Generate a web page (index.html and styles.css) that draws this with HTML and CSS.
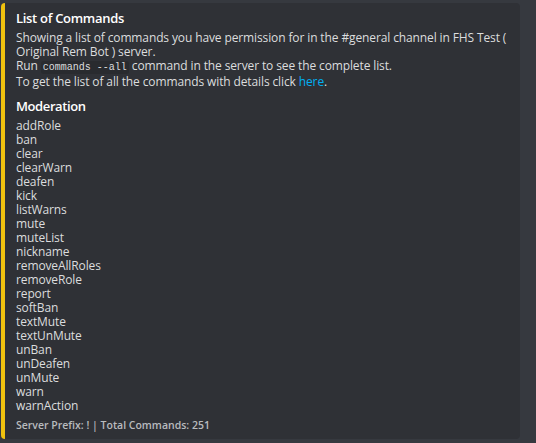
FILE: index.html
```html
<!DOCTYPE html>
<html>
<head>
<meta charset="utf-8">
<link rel="stylesheet" href="styles.css">
</head>
<body>
<div class="embed">
  <div class="title">List of Commands</div>
  <div class="desc">Showing a list of commands you have permission for in the #general channel in FHS Test ( Original Rem Bot ) server.<br>Run <code>commands --all</code> command in the server to see the complete list.<br>To get the list of all the commands with details click <a href="#">here</a>.</div>
  <div class="field">
    <div class="field-name">Moderation</div>
    <div class="field-value">addRole<br>ban<br>clear<br>clearWarn<br>deafen<br>kick<br>listWarns<br>mute<br>muteList<br>nickname<br>removeAllRoles<br>removeRole<br>report<br>softBan<br>textMute<br>textUnMute<br>unBan<br>unDeafen<br>unMute<br>warn<br>warnAction</div>
  </div>
  <div class="footer">Server Prefix: ! | Total Commands: 251</div>
</div>
</body>
</html>
```
FILE: styles.css
```css
html, body {
  margin: 0;
  padding: 0;
  background: #36393f;
  width: 536px;
  height: 443px;
  overflow: hidden;
}
body {
  padding: 3px 0 0 1px;
  box-sizing: border-box;
  font-family: "Open Sans", "Noto Sans", sans-serif;
}
.embed {
  width: 519px;
  height: 436px;
  box-sizing: border-box;
  background: #2f3136;
  border-left: 4px solid #f0c20f;
  border-radius: 4px;
  padding: 7px 10px 0 11px;
  color: #dcddde;
}
.title {
  color: #fff;
  font-weight: 600;
  font-size: 13px;
  letter-spacing: -0.3px;
  line-height: 17px;
  margin-bottom: 4px;
}
.desc {
  font-size: 12px;
  letter-spacing: -0.12px;
  line-height: 14px;
}
code {
  font-family: "Liberation Mono", monospace;
  font-size: 10px;
  letter-spacing: 0;
  background: #292b2f;
  padding: 1px 2px;
  border-radius: 3px;
}
a {
  color: #00b0f4;
  text-decoration: none;
}
.field {
  margin-top: 9px;
}
.field-name {
  color: #fff;
  font-weight: 600;
  font-size: 13px;
  letter-spacing: -0.4px;
  line-height: 16px;
  margin-bottom: 5px;
}
.field-value {
  font-size: 12px;
  letter-spacing: -0.12px;
  line-height: 14px;
}
.footer {
  margin-top: 5px;
  font-size: 10.5px;
  line-height: 14px;
  font-weight: 600;
  color: #b9bbbe;
}
```
